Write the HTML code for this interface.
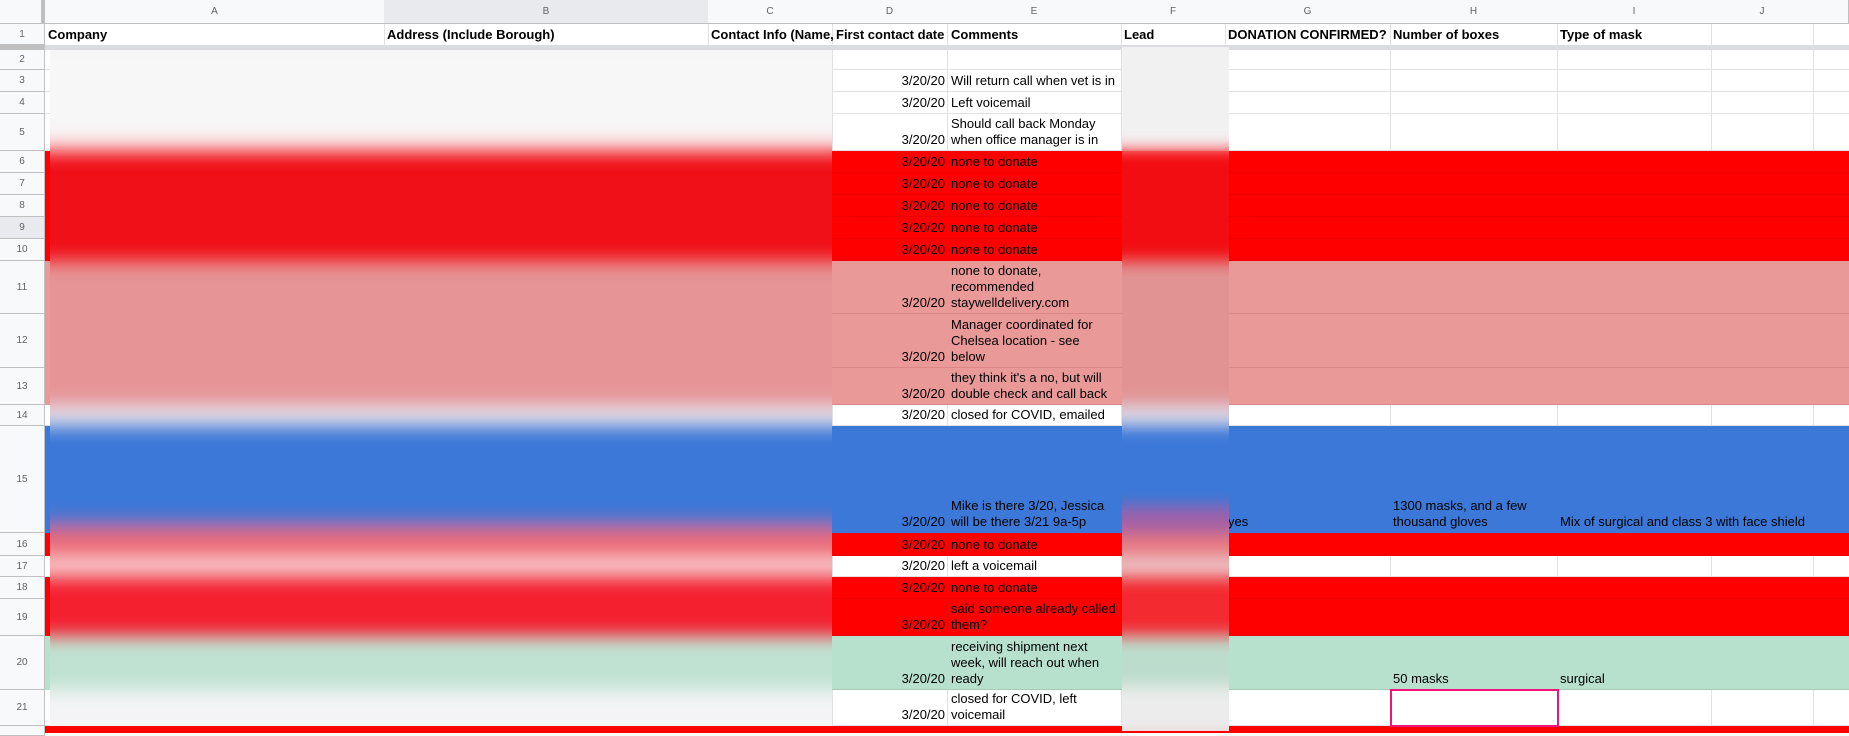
<!DOCTYPE html>
<html><head><meta charset="utf-8"><style>
*{margin:0;padding:0;box-sizing:border-box}
body{width:1849px;height:733px;overflow:hidden;background:#fff;font-family:"Liberation Sans",Arial,sans-serif;font-size:13px;color:#000;position:relative}
.a{position:absolute}
.hdr{position:absolute;top:0;height:24px;background:#f8f9fa;border-right:1px solid #c0c0c0;border-bottom:1px solid #c0c0c0;color:#5f6368;font-size:10px;text-align:center;line-height:24px}
.rn{position:absolute;left:0;width:45px;background:#f8f9fa;border-right:1px solid #c0c0c0;border-bottom:1px solid #c0c0c0;color:#5f6368;font-size:10px;display:flex;align-items:center;justify-content:center}
.row{position:absolute;left:45px;width:1804px;border-bottom:1px solid #e2e2e2}
.c{position:absolute;top:0;bottom:0;display:flex;flex-direction:column;justify-content:flex-end;padding:0 3px 2px 3px;line-height:16px;overflow:hidden;white-space:nowrap}
.d{left:788px;width:115px;text-align:right;align-items:flex-end}
.e{left:903px;width:175px}
.vl{position:absolute;top:24px;width:1px;height:709px;background:#e2e2e2}
.b{font-weight:bold}
</style></head><body>
<!-- vertical lines -->
<div class="vl" style="left:384px"></div><div class="vl" style="left:708px"></div><div class="vl" style="left:832px"></div><div class="vl" style="left:947px"></div><div class="vl" style="left:1121px"></div><div class="vl" style="left:1225px"></div><div class="vl" style="left:1390px"></div><div class="vl" style="left:1557px"></div><div class="vl" style="left:1711px"></div><div class="vl" style="left:1813px"></div>

<!-- row 1 -->
<div class="row" style="top:24px;height:21px;border:none">
<div class="c b" style="left:0;width:339px">Company</div>
<div class="c b" style="left:339px;width:324px">Address (Include Borough)</div>
<div class="c b" style="left:663px;width:125px">Contact Info (Name, Phone)</div>
<div class="c b" style="left:788px;width:115px">First contact date</div>
<div class="c b" style="left:903px;width:175px">Comments</div>
<div class="c b" style="left:1076px;width:104px">Lead</div>
<div class="c b" style="left:1180px;width:165px">DONATION CONFIRMED?</div>
<div class="c b" style="left:1345px;width:167px">Number of boxes</div>
<div class="c b" style="left:1512px;width:154px">Type of mask</div>
</div>
<div class="a" style="left:0;top:45px;width:1849px;height:5px;background:#dadce0"></div>

<div class="row" style="top:50px;height:20px"></div>
<div class="row" style="top:70px;height:22px"><div class="c d">3/20/20</div><div class="c e">Will return call when vet is in</div></div>
<div class="row" style="top:92px;height:22px"><div class="c d">3/20/20</div><div class="c e">Left voicemail</div></div>
<div class="row" style="top:114px;height:37px"><div class="c d">3/20/20</div><div class="c e"><span>Should call back Monday</span><span>when office manager is in</span></div></div>
<div class="row" style="top:151px;height:22px;background:#f00;border-color:#e00"><div class="c d">3/20/20</div><div class="c e">none to donate</div></div>
<div class="row" style="top:173px;height:22px;background:#f00;border-color:#e00"><div class="c d">3/20/20</div><div class="c e">none to donate</div></div>
<div class="row" style="top:195px;height:22px;background:#f00;border-color:#e00"><div class="c d">3/20/20</div><div class="c e">none to donate</div></div>
<div class="row" style="top:217px;height:22px;background:#f00;border-color:#e00"><div class="c d">3/20/20</div><div class="c e">none to donate</div></div>
<div class="row" style="top:239px;height:22px;background:#f00;border-color:#e00"><div class="c d">3/20/20</div><div class="c e">none to donate</div></div>
<div class="row" style="top:261px;height:53px;background:#ea9999;border-color:#d88"><div class="c d">3/20/20</div><div class="c e"><span>none to donate,</span><span>recommended</span><span>staywelldelivery.com</span></div></div>
<div class="row" style="top:314px;height:54px;background:#ea9999;border-color:#d88"><div class="c d">3/20/20</div><div class="c e"><span>Manager coordinated for</span><span>Chelsea location - see</span><span>below</span></div></div>
<div class="row" style="top:368px;height:37px;background:#ea9999;border-color:#d88"><div class="c d">3/20/20</div><div class="c e"><span>they think it's a no, but will</span><span>double check and call back</span></div></div>
<div class="row" style="top:405px;height:21px"><div class="c d">3/20/20</div><div class="c e">closed for COVID, emailed</div></div>
<div class="row" style="top:426px;height:107px;background:#3c78d8;border-color:#3c78d8"><div class="c d">3/20/20</div><div class="c e"><span>Mike is there 3/20, Jessica</span><span>will be there 3/21 9a-5p</span></div>
<div class="c" style="left:1180px;width:165px">yes</div><div class="c" style="left:1345px;width:167px"><span>1300 masks, and a few</span><span>thousand gloves</span></div><div class="c" style="left:1512px;width:260px">Mix of surgical and class 3 with face shield</div></div>
<div class="row" style="top:533px;height:23px;background:#f00;border-color:#e00"><div class="c d">3/20/20</div><div class="c e">none to donate</div></div>
<div class="row" style="top:556px;height:21px"><div class="c d">3/20/20</div><div class="c e">left a voicemail</div></div>
<div class="row" style="top:577px;height:22px;background:#f00;border-color:#e00"><div class="c d">3/20/20</div><div class="c e">none to donate</div></div>
<div class="row" style="top:599px;height:37px;background:#f00;border-color:#e00"><div class="c d">3/20/20</div><div class="c e"><span>said someone already called</span><span>them?</span></div></div>
<div class="row" style="top:636px;height:54px;background:#b7e1cd;border-color:#a8c8b8"><div class="c d">3/20/20</div><div class="c e"><span>receiving shipment next</span><span>week, will reach out when</span><span>ready</span></div>
<div class="c" style="left:1345px;width:167px">50 masks</div><div class="c" style="left:1512px;width:154px">surgical</div></div>
<div class="row" style="top:690px;height:36px"><div class="c d">3/20/20</div><div class="c e"><span>closed for COVID, left</span><span>voicemail</span></div></div>
<div class="row" style="top:726px;height:7px;background:#f00;border:none"></div>

<!-- selection -->
<div class="a" style="left:1390px;top:689px;width:169px;height:38px;border:2px solid #f0157a"></div>

<!-- blurred A-C -->
<div class="a" style="left:50px;top:50px;width:782px;height:676px;overflow:hidden">
<div class="a" style="left:-30px;top:-20px;width:850px;height:720px;filter:blur(9px)">
<div class="a" style="left:0;top:0;width:850px;height:20px;background:#f3f3f5"></div>
<div class="a" style="left:0;top:20px;width:850px;height:85px;background:#f7f7f8"></div>
<div class="a" style="left:0;top:105px;width:850px;height:20px;background:#fbe7e8"></div>
<div class="a" style="left:0;top:121px;width:850px;height:110px;background:#f01018"></div>
<div class="a" style="left:0;top:231px;width:850px;height:144px;background:#e69495"></div>
<div class="a" style="left:0;top:375px;width:850px;height:21px;background:#e4e0ea"></div>
<div class="a" style="left:0;top:396px;width:850px;height:95px;background:#3c78d8"></div>
<div class="a" style="left:0;top:491px;width:850px;height:16px;background:#b86aa8"></div>
<div class="a" style="left:0;top:503px;width:850px;height:23px;background:#ee6a74"></div>
<div class="a" style="left:0;top:526px;width:850px;height:21px;background:#f7cdd0"></div>
<div class="a" style="left:0;top:547px;width:850px;height:59px;background:#f42030"></div>
<div class="a" style="left:0;top:606px;width:850px;height:54px;background:#bfe2d2"></div>
<div class="a" style="left:0;top:660px;width:850px;height:80px;background:#f4f4f6"></div>
</div></div>
<!-- cell A left strip colors -->
<div class="a" style="left:45px;top:151px;width:5px;height:110px;background:#f00"></div>
<div class="a" style="left:45px;top:261px;width:5px;height:144px;background:#ea9999"></div>
<div class="a" style="left:45px;top:426px;width:5px;height:107px;background:#3c78d8"></div>
<div class="a" style="left:45px;top:533px;width:5px;height:23px;background:#f00"></div>
<div class="a" style="left:45px;top:577px;width:5px;height:59px;background:#f00"></div>
<div class="a" style="left:45px;top:636px;width:5px;height:54px;background:#b7e1cd"></div>

<!-- blurred F -->
<div class="a" style="left:1122px;top:47px;width:107px;height:684px;overflow:hidden">
<div class="a" style="left:-20px;top:-20px;width:150px;height:730px;filter:blur(8px)">
<div class="a" style="left:0;top:0;width:150px;height:120px;background:#f1f1f1"></div>
<div class="a" style="left:0;top:124px;width:150px;height:110px;background:#f20d12"></div>
<div class="a" style="left:0;top:234px;width:150px;height:144px;background:#e19393"></div>
<div class="a" style="left:0;top:378px;width:150px;height:21px;background:#dcd8e6"></div>
<div class="a" style="left:0;top:399px;width:150px;height:80px;background:#3c78d8"></div>
<div class="a" style="left:0;top:479px;width:150px;height:27px;background:#a060a8"></div>
<div class="a" style="left:0;top:506px;width:150px;height:23px;background:#e87880"></div>
<div class="a" style="left:0;top:529px;width:150px;height:21px;background:#ecc4c6"></div>
<div class="a" style="left:0;top:550px;width:150px;height:59px;background:#f32a30"></div>
<div class="a" style="left:0;top:609px;width:150px;height:50px;background:#bcdccc"></div>
<div class="a" style="left:0;top:659px;width:150px;height:50px;background:#ececec"></div>
<div class="a" style="left:0;top:709px;width:150px;height:30px;background:#e8b0b0"></div>
</div></div>

<!-- column headers -->
<div class="hdr" style="left:0;width:45px;border-right:4px solid #c0c0c0"></div>
<div class="hdr" style="left:45px;width:340px">A</div>
<div class="hdr" style="left:384px;width:325px;background:#e8eaed">B</div>
<div class="hdr" style="left:708px;width:125px">C</div>
<div class="hdr" style="left:832px;width:116px">D</div>
<div class="hdr" style="left:947px;width:175px">E</div>
<div class="hdr" style="left:1121px;width:105px">F</div>
<div class="hdr" style="left:1225px;width:166px">G</div>
<div class="hdr" style="left:1390px;width:168px">H</div>
<div class="hdr" style="left:1557px;width:155px">I</div>
<div class="hdr" style="left:1711px;width:103px">J</div>
<div class="hdr" style="left:1813px;width:36px"></div>

<!-- row numbers -->
<div class="rn" style="top:24px;height:21px">1</div>
<div class="rn" style="top:45px;height:5px;background:#c0c0c0"></div>
<div class="rn" style="top:50px;height:20px">2</div>
<div class="rn" style="top:70px;height:22px">3</div>
<div class="rn" style="top:92px;height:22px">4</div>
<div class="rn" style="top:114px;height:37px">5</div>
<div class="rn" style="top:151px;height:22px">6</div>
<div class="rn" style="top:173px;height:22px">7</div>
<div class="rn" style="top:195px;height:22px">8</div>
<div class="rn" style="top:217px;height:22px;background:#e8eaed">9</div>
<div class="rn" style="top:239px;height:22px">10</div>
<div class="rn" style="top:261px;height:53px">11</div>
<div class="rn" style="top:314px;height:54px">12</div>
<div class="rn" style="top:368px;height:37px">13</div>
<div class="rn" style="top:405px;height:21px">14</div>
<div class="rn" style="top:426px;height:107px">15</div>
<div class="rn" style="top:533px;height:23px">16</div>
<div class="rn" style="top:556px;height:21px">17</div>
<div class="rn" style="top:577px;height:22px">18</div>
<div class="rn" style="top:599px;height:37px">19</div>
<div class="rn" style="top:636px;height:54px">20</div>
<div class="rn" style="top:690px;height:36px">21</div>
<div class="rn" style="top:726px;height:10px"></div>
</body></html>
